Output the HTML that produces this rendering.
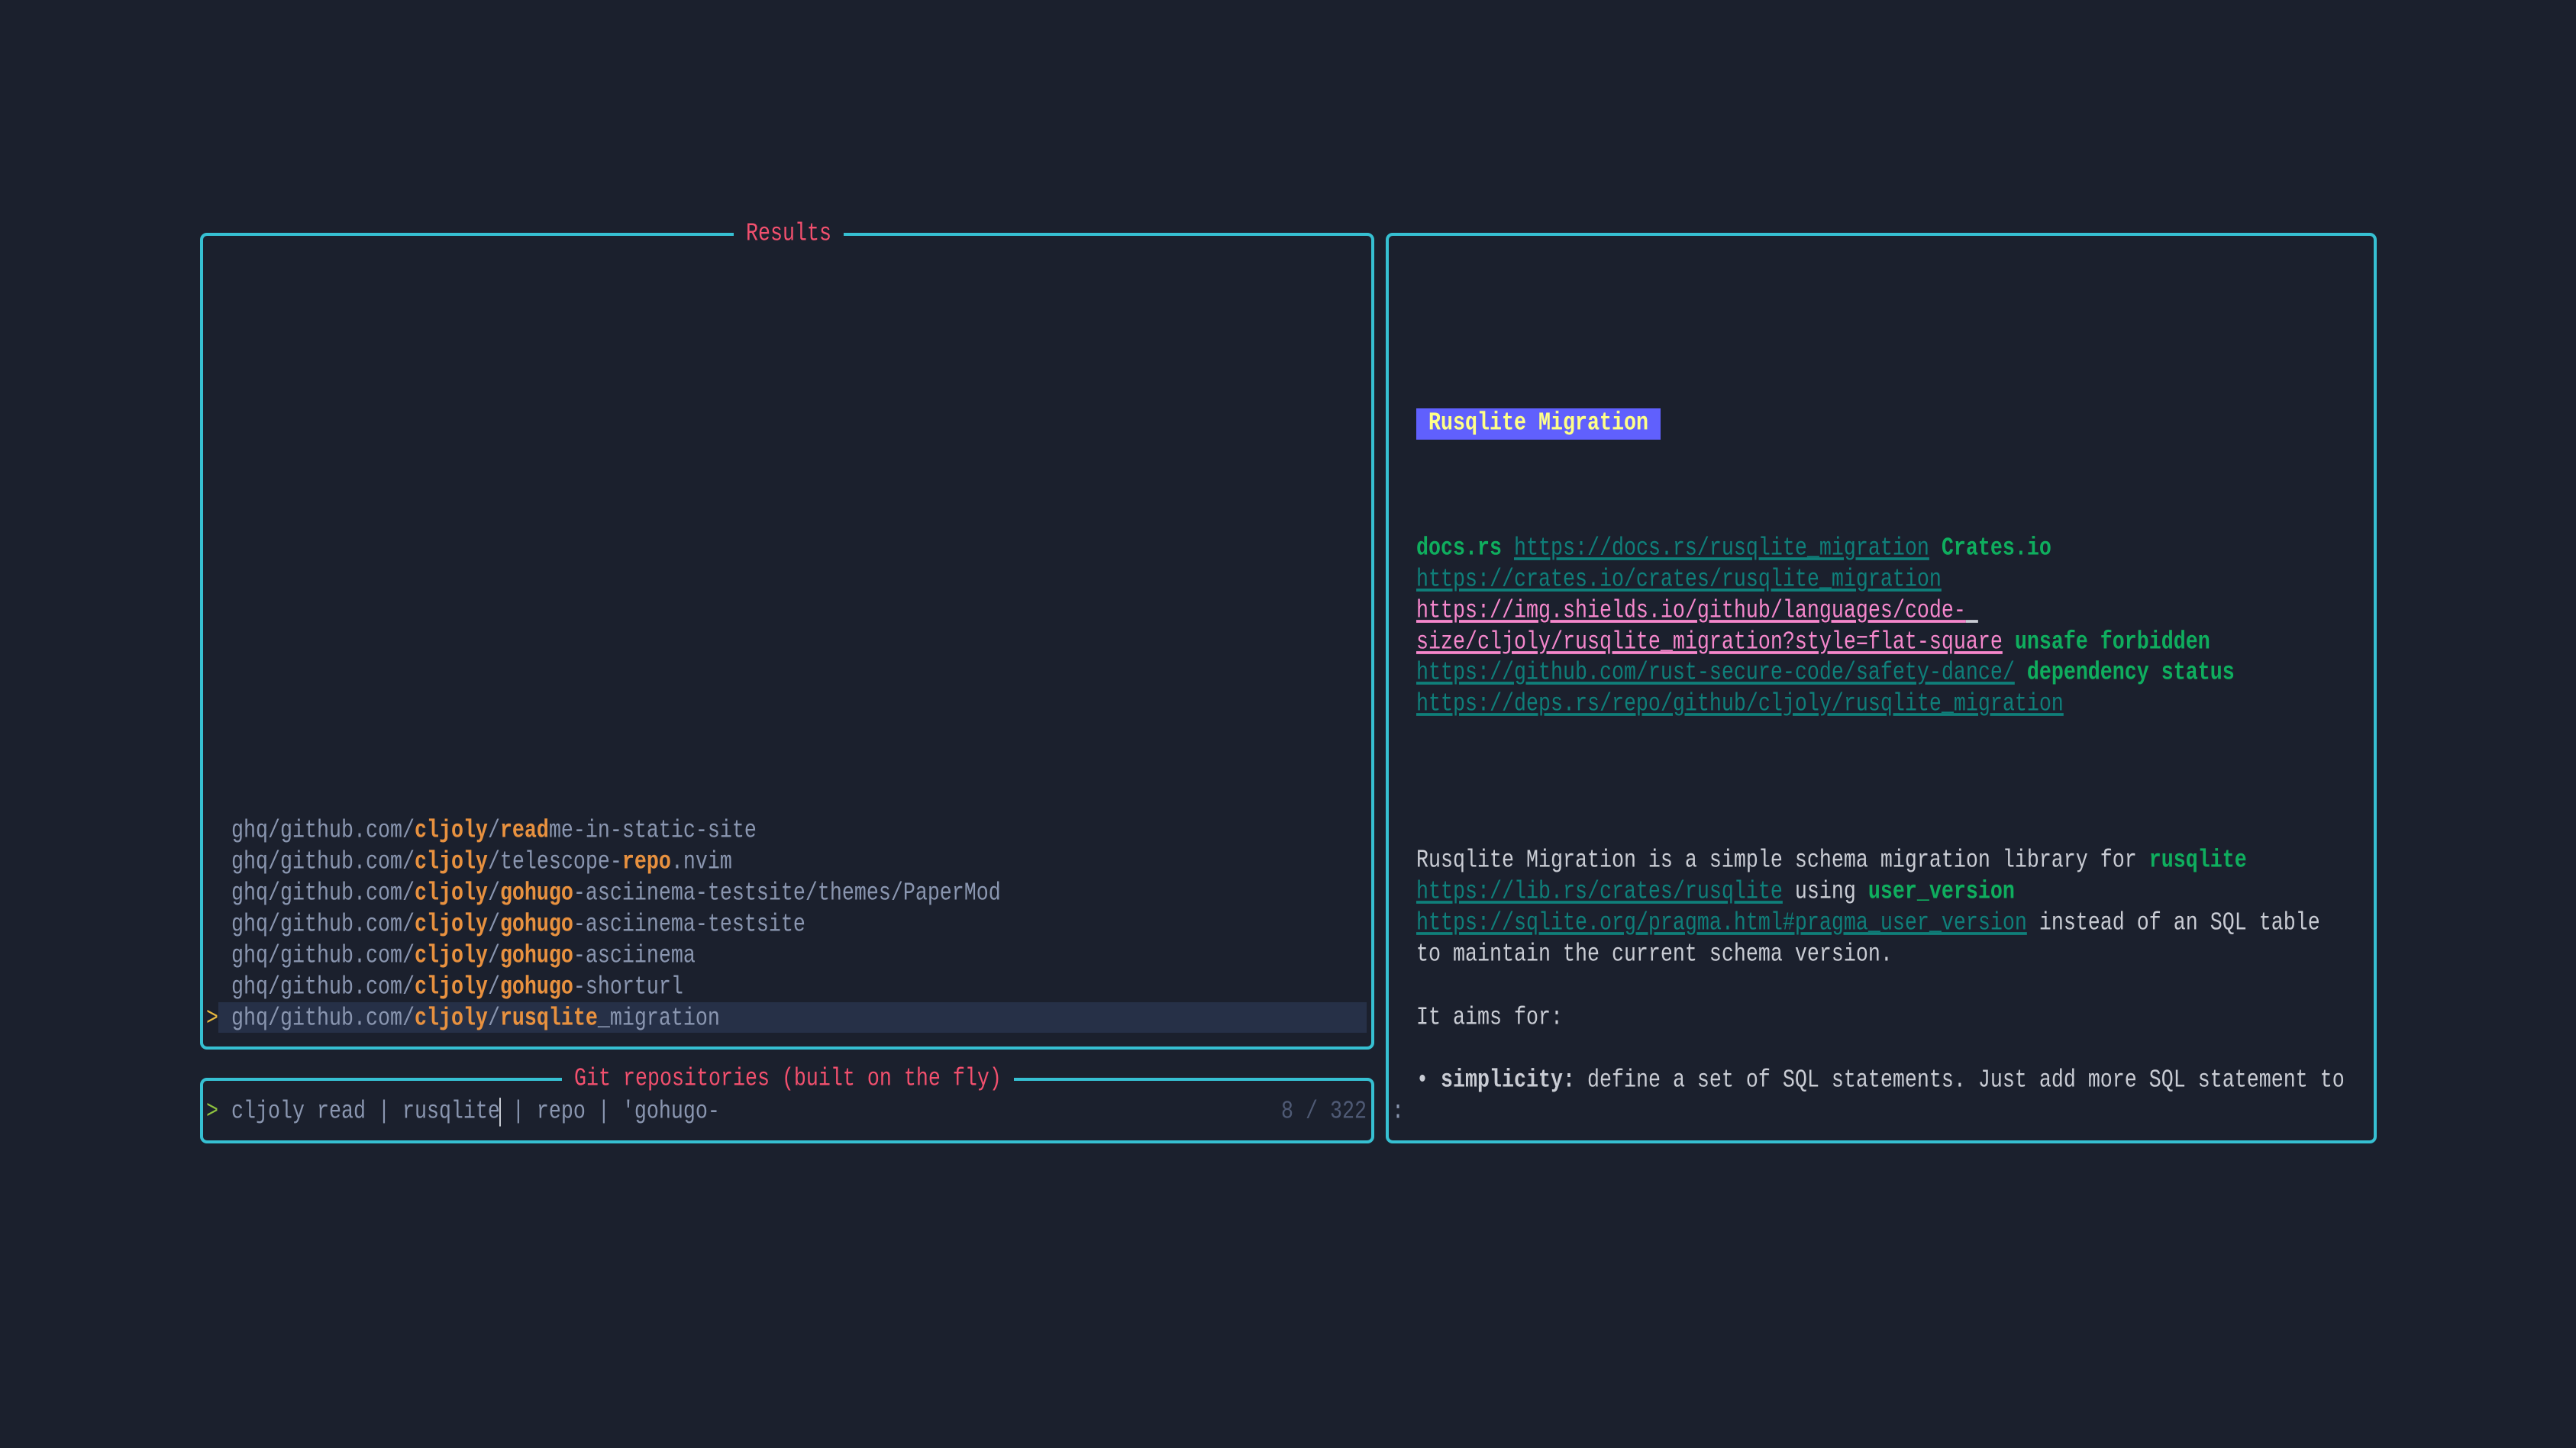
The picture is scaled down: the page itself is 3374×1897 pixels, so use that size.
<!DOCTYPE html>
<html><head><meta charset="utf-8"><style>
html,body{margin:0;padding:0;background:#1b202d;width:3374px;height:1897px;overflow:hidden}
body{position:relative;font-family:"Liberation Mono",monospace;font-size:26.67px}
.box{position:absolute;border:4px solid #36c0d2;border-radius:9px;box-sizing:border-box}
.ttl{position:absolute;top:-22px;height:41px;line-height:41px;background:#1b202d;color:#f2506e;padding:0 16px;white-space:pre}
.ttl>span{display:inline-block;transform:scaleY(1.25)}
.l{position:absolute;height:41px;line-height:41px;white-space:pre}
.l>span.s{display:inline-block;transform:scaleY(1.25)}
.g{color:#8a96b0}
.o{color:#e8913f;font-weight:bold}
.w{color:#c9ccd4}
.gr{color:#0fae5e;font-weight:bold}
.tl{color:#0f7f7a;text-decoration:underline;text-decoration-thickness:3px;text-underline-offset:3px}
.pk{color:#f587cc;text-decoration:underline;text-decoration-thickness:3px;text-underline-offset:3px}
.b{font-weight:bold}
</style></head><body>
<div class="box" style="left:262px;top:305px;width:1538px;height:1070px"><div class="ttl" style="left:695px"><span>Results</span></div></div>
<div class="box" style="left:262px;top:1412px;width:1538px;height:86px"><div class="ttl" style="left:470px"><span>Git repositories (built on the fly)</span></div></div>
<div class="box" style="left:1815px;top:305px;width:1298px;height:1193px"></div>

<div style="position:absolute;left:286px;top:1313px;width:1504px;height:40px;background:#263047"></div>

<div class="l g" style="left:303px;top:1069px"><span class="s">ghq/github.com/<span class="o">cljoly</span>/<span class="o">read</span>me-in-static-site</span></div>
<div class="l g" style="left:303px;top:1110px"><span class="s">ghq/github.com/<span class="o">cljoly</span>/telescope-<span class="o">repo</span>.nvim</span></div>
<div class="l g" style="left:303px;top:1151px"><span class="s">ghq/github.com/<span class="o">cljoly</span>/<span class="o">gohugo</span>-asciinema-testsite/themes/PaperMod</span></div>
<div class="l g" style="left:303px;top:1192px"><span class="s">ghq/github.com/<span class="o">cljoly</span>/<span class="o">gohugo</span>-asciinema-testsite</span></div>
<div class="l g" style="left:303px;top:1233px"><span class="s">ghq/github.com/<span class="o">cljoly</span>/<span class="o">gohugo</span>-asciinema</span></div>
<div class="l g" style="left:303px;top:1274px"><span class="s">ghq/github.com/<span class="o">cljoly</span>/<span class="o">gohugo</span>-shorturl</span></div>
<div class="l" style="left:270px;top:1315px;color:#e8b83f"><span class="s">&gt;</span></div>
<div class="l g" style="left:303px;top:1315px"><span class="s">ghq/github.com/<span class="o">cljoly</span>/<span class="o">rusqlite</span>_migration</span></div>

<div class="l" style="left:270px;top:1437px;color:#8ec23f"><span class="s">&gt;</span></div>
<div class="l g" style="left:303px;top:1437px"><span class="s">cljoly read | rusqlite<span style="border-left:2px solid #c9ccd4;margin-left:-1px;margin-right:-1px"></span> | repo | 'gohugo-</span></div>
<div class="l" style="left:1678px;top:1437px;color:#4f5a75"><span class="s">8 / 322</span></div>

<div style="position:absolute;left:1855px;top:535px;width:320px;height:41px;background:#6060fd"></div>
<div class="l" style="left:1871px;top:535px;color:#ffff88;font-weight:bold"><span class="s">Rusqlite Migration</span></div>

<div class="l" style="left:1855px;top:699px"><span class="s"><span class="gr">docs.rs</span> <span class="tl">https://docs.rs/rusqlite_migration</span> <span class="gr">Crates.io</span></span></div>
<div class="l" style="left:1855px;top:740px"><span class="s"><span class="tl">https://crates.io/crates/rusqlite_migration</span></span></div>
<div class="l" style="left:1855px;top:781px"><span class="s"><span class="pk">https://img.shields.io/github/languages/code-</span><span style="text-decoration:underline;text-decoration-thickness:3px;text-underline-offset:3px;color:#c9ccd4"> </span></span></div>
<div class="l" style="left:1855px;top:822px"><span class="s"><span class="pk">size/cljoly/rusqlite_migration?style=flat-square</span> <span class="gr">unsafe forbidden</span></span></div>
<div class="l" style="left:1855px;top:862px"><span class="s"><span class="tl">https://github.com/rust-secure-code/safety-dance/</span> <span class="gr">dependency status</span></span></div>
<div class="l" style="left:1855px;top:903px"><span class="s"><span class="tl">https://deps.rs/repo/github/cljoly/rusqlite_migration</span></span></div>

<div class="l w" style="left:1855px;top:1108px"><span class="s">Rusqlite Migration is a simple schema migration library for <span class="gr">rusqlite</span></span></div>
<div class="l w" style="left:1855px;top:1149px"><span class="s"><span class="tl">https://lib.rs/crates/rusqlite</span> using <span class="gr">user_version</span></span></div>
<div class="l w" style="left:1855px;top:1190px"><span class="s"><span class="tl">https://sqlite.org/pragma.html#pragma_user_version</span> instead of an SQL table</span></div>
<div class="l w" style="left:1855px;top:1231px"><span class="s">to maintain the current schema version.</span></div>
<div class="l w" style="left:1855px;top:1314px"><span class="s">It aims for:</span></div>
<div class="l w" style="left:1855px;top:1396px"><span class="s">• <span class="b">simplicity:</span> define a set of SQL statements. Just add more SQL statement to</span></div>
<div class="l" style="left:1823px;top:1437px;color:#8a96b0"><span class="s">:</span></div>
</body></html>
